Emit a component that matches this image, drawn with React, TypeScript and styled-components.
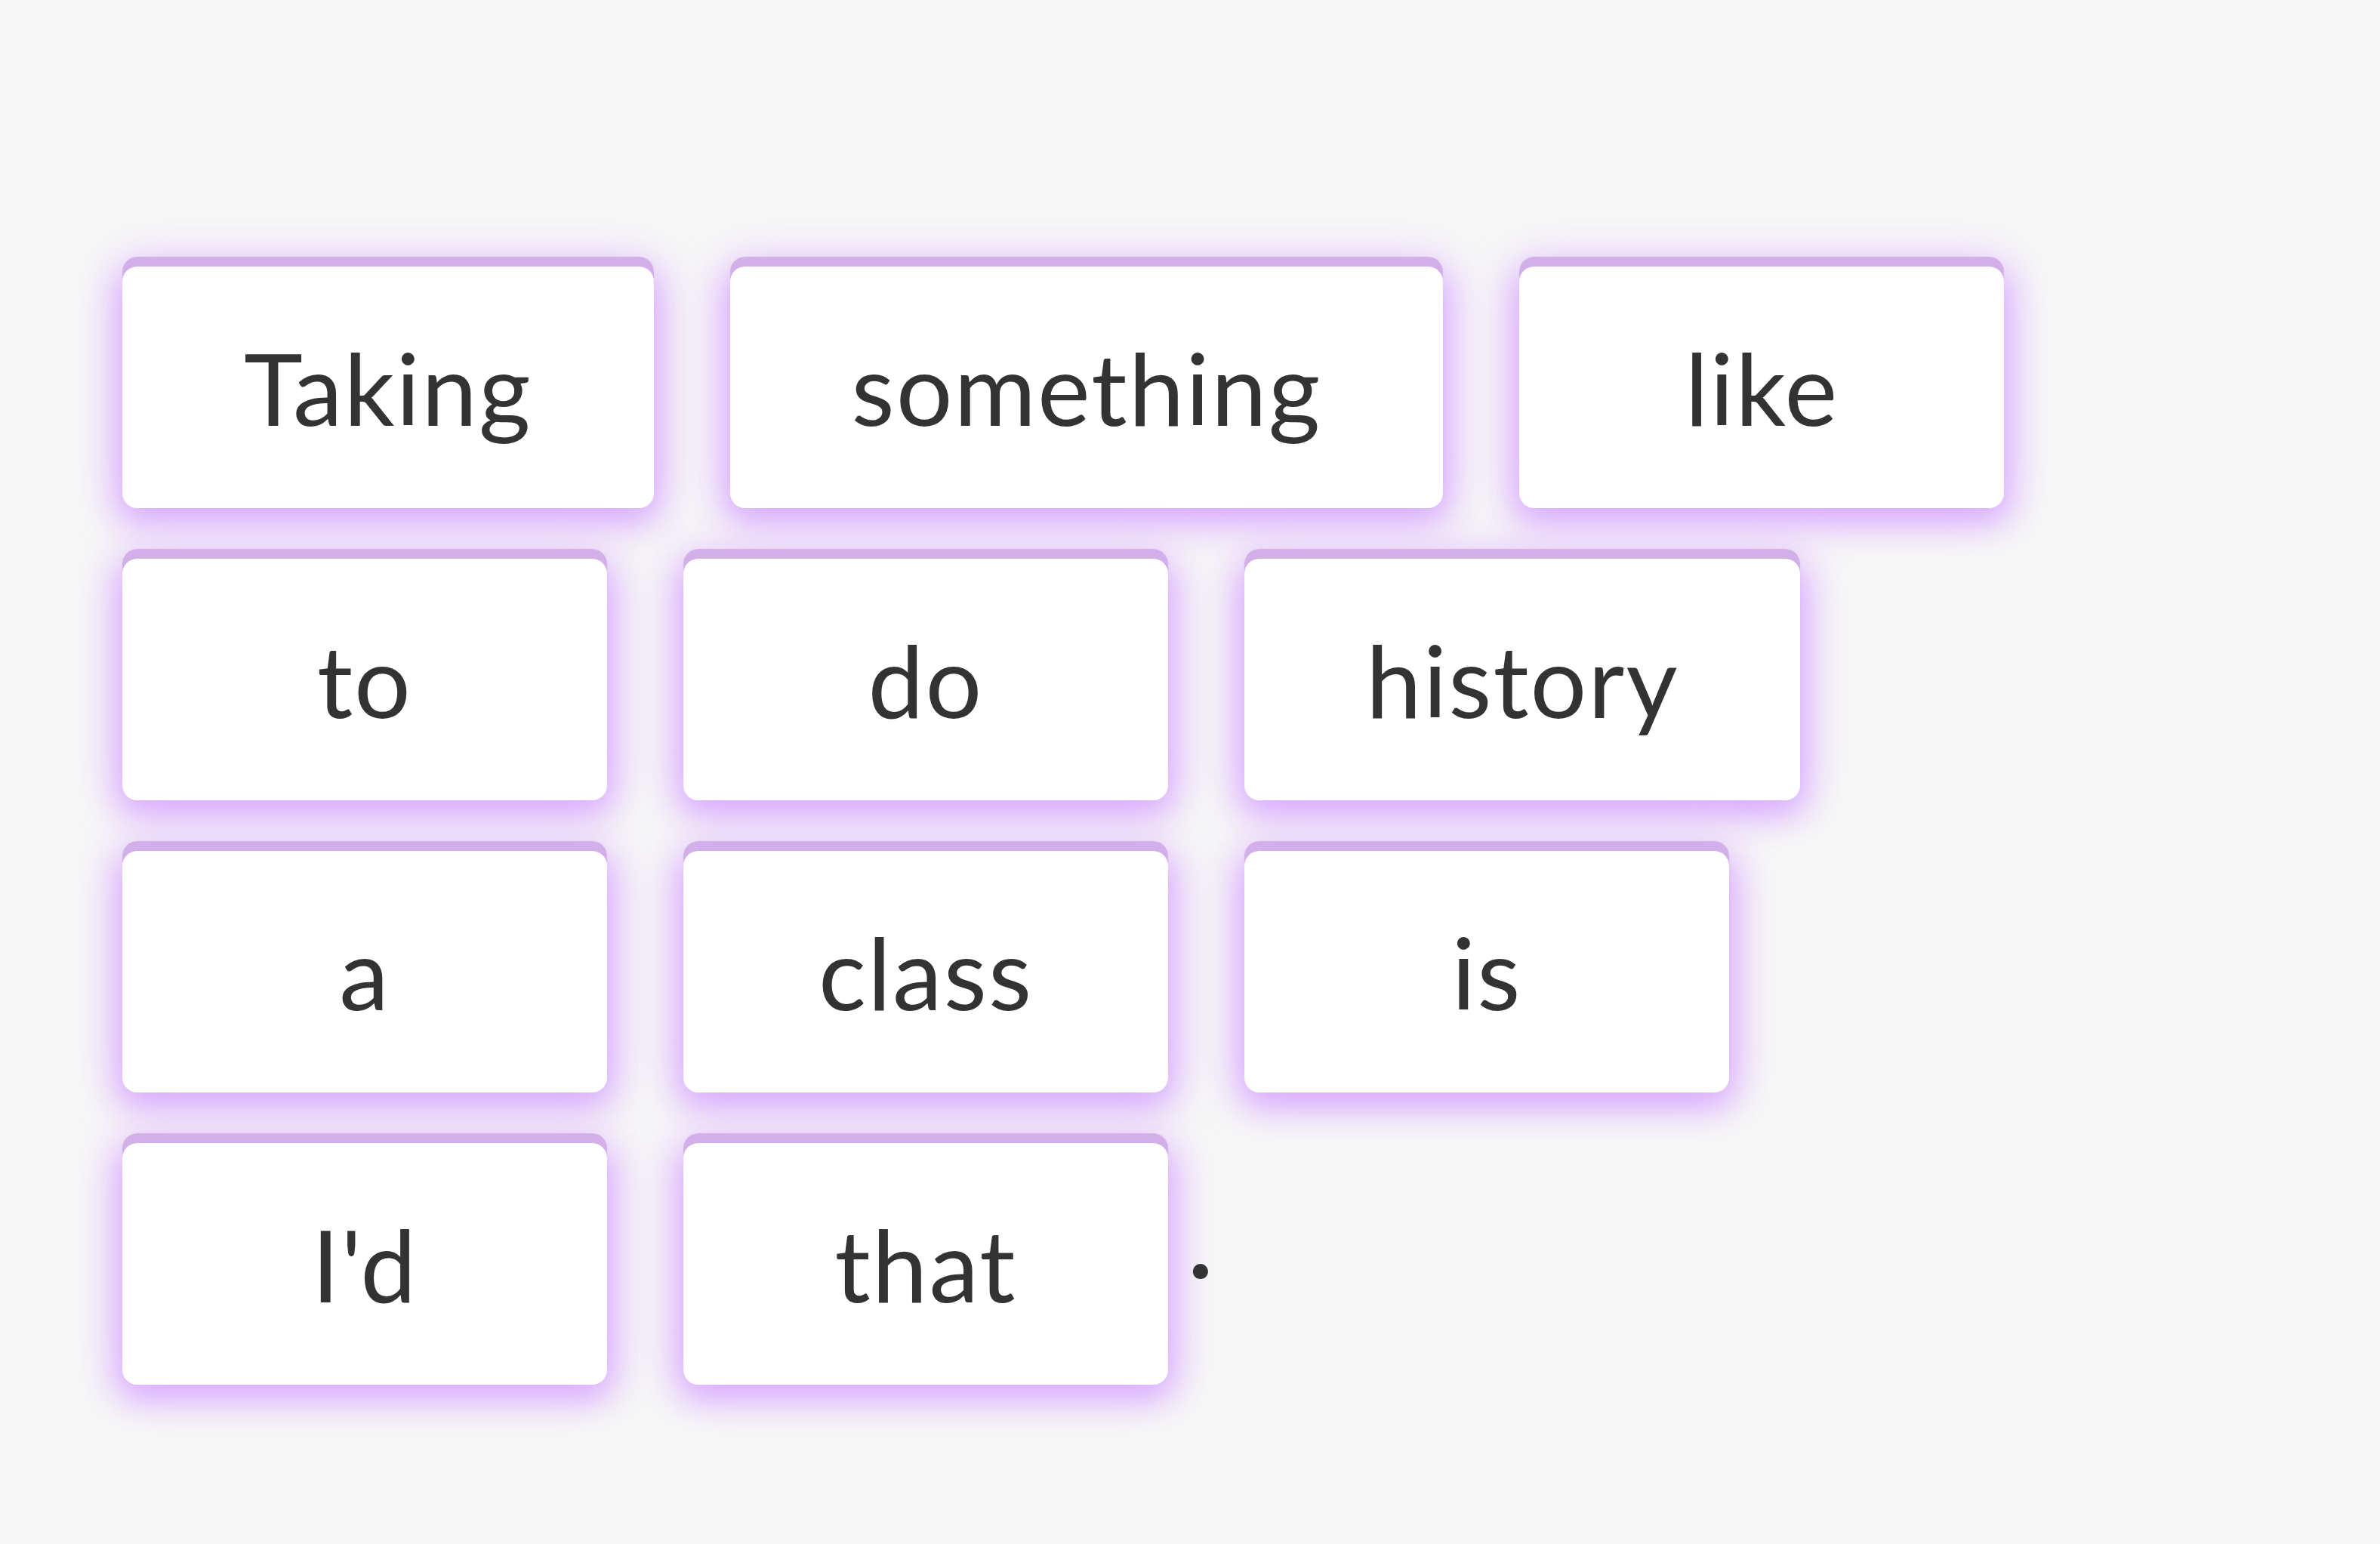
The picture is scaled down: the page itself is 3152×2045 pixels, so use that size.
import React from "react";
import styled, { createGlobalStyle } from "styled-components";

const GlobalStyle = createGlobalStyle`
  html, body {
    margin: 0;
    padding: 0;
    background: #f7f7f7;
  }
  body {
    font-family: Lato, "Open Sans", "Liberation Sans", sans-serif;
    color: #333333;
  }
`;

const Page = styled.main`
  min-height: 2045px;
  box-sizing: border-box;
  padding: 353px 0 0 162px;
`;

const Sentence = styled.div`
  width: 2700px;
  display: flex;
  flex-wrap: wrap;
  align-items: center;
  column-gap: 101px;
  row-gap: 67px;
`;

const Word = styled.div`
  box-sizing: border-box;
  height: 320px;
  min-width: 642px;
  padding: 0 161px;
  display: flex;
  align-items: center;
  justify-content: center;
  background: #ffffff;
  border-radius: 20px;
  box-shadow:
    0 -13px 1px #d3afe9,
    0 14px 44px 4px rgba(214, 160, 255, 0.85),
    0 0 60px 10px rgba(226, 190, 255, 0.7);
  font-size: 132px;
  letter-spacing: 2px;
  line-height: 1;
  color: #333333;
  white-space: nowrap;
`;

const Ending = styled.div`
  display: flex;
  align-items: center;
  gap: 24px;
`;

const Period = styled.span`
  font-size: 160px;
  line-height: 1;
  color: #333333;
  margin-bottom: 86px;
`;

const words = ["Taking", "something", "like", "to", "do", "history", "a", "class", "is", "I'd"];

export default function App() {
  return (
    <>
      <GlobalStyle />
      <Page>
        <Sentence>
          {words.map((w, i) => (
            <Word key={i}>{w}</Word>
          ))}
          <Ending>
            <Word>that</Word>
            <Period>.</Period>
          </Ending>
        </Sentence>
      </Page>
    </>
  );
}
